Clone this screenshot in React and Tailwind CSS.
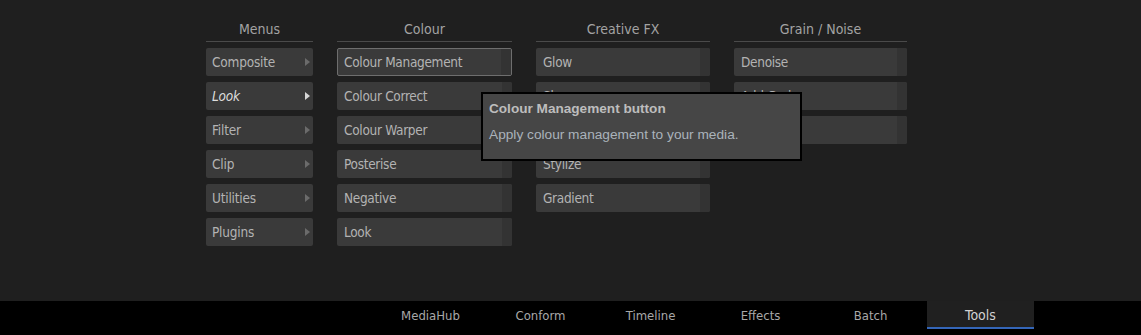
import React from "react";

const UI = { fontFamily: '"Liberation Sans Narrow", "DejaVu Sans Condensed", Roboto, sans-serif' };

function Arrow({ active }) {
  return (
    <svg width="6" height="10" viewBox="0 0 6 10" className="shrink-0">
      <polygon points="0,1 5,5 0,9" fill={active ? "#d6d6d6" : "#6b6b6b"} />
    </svg>
  );
}

function MenuBtn({ label, active }) {
  return (
    <div className="h-[28px] rounded-[2px] bg-[#3a3a3a] flex items-center justify-between pl-[6px] pr-[2px]">
      <span className={active ? "italic text-[#dedede] text-[13.5px] tracking-[-0.2px]" : "text-[#b3b3b3] text-[13.5px] tracking-[-0.2px]"}>{label}</span>
      <Arrow active={active} />
    </div>
  );
}

function ToolBtn({ label, hover }) {
  return (
    <div
      className={
        "h-[28px] rounded-[2px] bg-[#3a3a3a] flex items-stretch overflow-hidden " +
        (hover ? "border border-[#6e6e6e]" : "")
      }
    >
      <div className={"flex-1 flex items-center text-[13.5px] tracking-[-0.3px] text-[#b3b3b3] " + (hover ? "pl-[6px]" : "pl-[7px]")}>
        {label}
      </div>
      <div className="w-[10px] bg-[#333333]" />
    </div>
  );
}

function Column({ title, width, children }) {
  return (
    <div className={"flex flex-col " + width}>
      <div className="h-[23px] border-b border-[#4a4a4a] flex items-start justify-center text-[14px] leading-[20px] text-[#a3a3a3]">
        {title}
      </div>
      <div className="mt-[6px] flex flex-col gap-[6px]">{children}</div>
    </div>
  );
}

export default function App() {
  const tabs = ["MediaHub", "Conform", "Timeline", "Effects", "Batch", "Tools"];
  return (
    <div className="w-[1141px] h-[335px] bg-[#1f1f1f] flex flex-col overflow-hidden" style={UI}>
      <div className="relative h-[301px] pt-[19px] pl-[206px] flex gap-[24px]">
        <Column title="Menus" width="w-[107px]">
          <MenuBtn label="Composite" />
          <MenuBtn label="Look" active />
          <MenuBtn label="Filter" />
          <MenuBtn label="Clip" />
          <MenuBtn label="Utilities" />
          <MenuBtn label="Plugins" />
        </Column>
        <Column title="Colour" width="w-[175px]">
          <ToolBtn label="Colour Management" hover />
          <ToolBtn label="Colour Correct" />
          <ToolBtn label="Colour Warper" />
          <ToolBtn label="Posterise" />
          <ToolBtn label="Negative" />
          <ToolBtn label="Look" />
        </Column>
        <Column title="Creative FX" width="w-[174px]">
          <ToolBtn label="Glow" />
          <ToolBtn label="Sharpen" />
          <ToolBtn label="Blur" />
          <ToolBtn label="Stylize" />
          <ToolBtn label="Gradient" />
        </Column>
        <Column title="Grain / Noise" width="w-[173px]">
          <ToolBtn label="Denoise" />
          <ToolBtn label="Add Grain" />
          <ToolBtn label="Add Noise" />
        </Column>

        <div
          className="absolute left-[481px] top-[92px] w-[321px] h-[69px] bg-[#464646] border-2 border-black pl-[6px] pt-[7px]"
          style={{ fontFamily: '"Liberation Sans", Arial, sans-serif' }}
        >
          <div className="text-[13.6px] leading-[16px] font-bold text-[#bdbdbd]">Colour Management button</div>
          <div className="mt-[10px] text-[13.7px] leading-[16px] text-[#aab3bb]">Apply colour management to your media.</div>
        </div>
      </div>

      <div className="h-[34px] bg-black flex pl-[377px] gap-[3px]">
        {tabs.map((t) =>
          t === "Tools" ? (
            <div
              key={t}
              className="w-[107px] h-[28px] pt-[2px] bg-[#202020] border-b-2 border-[#3466b8] flex items-center justify-center text-[14px] text-[#d2d2d2]"
            >
              {t}
            </div>
          ) : (
            <div key={t} className="w-[107px] h-[28px] pt-[2px] flex items-center justify-center text-[13px] text-[#a8a8a8]">
              {t}
            </div>
          )
        )}
      </div>
    </div>
  );
}
